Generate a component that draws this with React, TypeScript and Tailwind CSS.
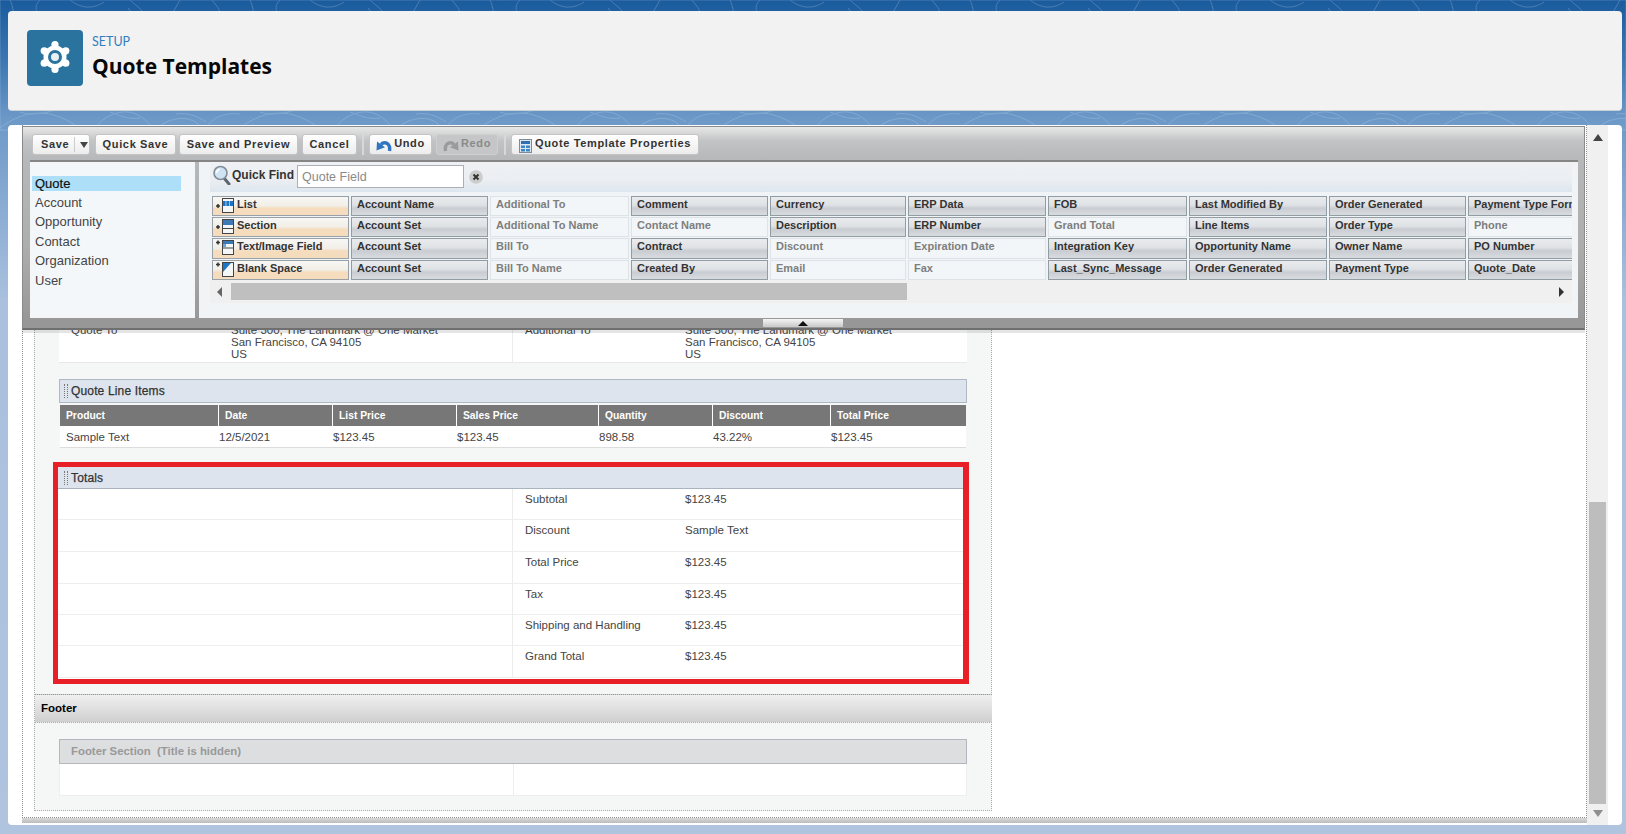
const sans = "font-['Liberation_Sans',Arial,sans-serif]";

const Gear = () => (
  <svg viewBox="0 0 56 56" className="w-[56px] h-[56px]">
    <g fill="#fff">
      <circle cx="28" cy="27" r="11.5" />
      <circle cx="28" cy="14.5" r="3.6" />
      <circle cx="28" cy="39.5" r="3.6" />
      <circle cx="17.2" cy="20.8" r="3.6" />
      <circle cx="38.8" cy="20.8" r="3.6" />
      <circle cx="17.2" cy="33.2" r="3.6" />
      <circle cx="38.8" cy="33.2" r="3.6" />
      <path d="M25 15h6l1 5h-8zM25 39h6l1-5h-8zM15 23l3-5.2 4.7 1.8-4 6.8zM41 23l-3-5.2-4.7 1.8 4 6.8zM15 31l3 5.2 4.7-1.8-4-6.8zM41 31l-3 5.2-4.7-1.8 4-6.8z" />
    </g>
    <circle cx="28" cy="27" r="5.5" fill="#e8f0f4" stroke="#2b739f" strokeWidth="3" />
  </svg>
);

const TopoLines = () => (
  <svg className="absolute inset-0 w-full h-full opacity-25" viewBox="0 0 1626 834" fill="none" stroke="#cfe0f2" strokeWidth="1">
    <defs>
      <pattern id="topo" width="240" height="130" patternUnits="userSpaceOnUse">
        <path d="M10 0c4 8 2 14 8 22M40 0c-6 6-4 10-2 14M70 0c10 8 22 10 34 2M130 0c6 6 14 10 12 14s-10 0-14-6M180 0l-8 14M212 0c4 6 10 10 6 14" />
        <path d="M0 128c18-14 40-20 62-10 14 6 18 12 26 12M96 128c6-12 26-20 40-14 12 6 10 10 20 14M160 126c10-8 30-12 40 0M206 128c6-10 18-16 34-14" />
        <path d="M20 112c10 4 26 2 40-4M110 112c8 2 16 8 30 6M176 114c10-2 22 2 30 8" />
      </pattern>
    </defs>
    <rect width="1626" height="130" fill="url(#topo)" />
  </svg>
);

const Undo = ({ color }: { color: string }) => (
  <svg viewBox="0 0 16 15" className="w-[16px] h-[15px] shrink-0">
    <path d="M13.5 14C14.5 8 11 4.5 6.5 6.2L5 7.5" fill="none" stroke={color} strokeWidth="3.4" />
    <path d="M0.5 13.5L1 4.5L9 10.2Z" fill={color} />
  </svg>
);

const Redo = ({ color }: { color: string }) => (
  <svg viewBox="0 0 16 15" className="w-[16px] h-[15px] shrink-0">
    <path d="M2.5 14C1.5 8 5 4.5 9.5 6.2L11 7.5" fill="none" stroke={color} strokeWidth="3.4" />
    <path d="M15.5 13.5L15 4.5L7 10.2Z" fill={color} />
  </svg>
);

const PropsIcon = () => (
  <svg viewBox="0 0 13 14" className="w-[13px] h-[14px] shrink-0 mt-[2px]">
    <rect x="0.5" y="0.5" width="12" height="13" fill="#dfe7ef" stroke="#7c8a99" />
    <rect x="2" y="2" width="9" height="3" fill="#2f6fb0" />
    <rect x="2" y="6.5" width="4" height="2.5" fill="#3e86c6" />
    <rect x="7" y="6.5" width="4" height="2.5" fill="#3e86c6" />
    <rect x="2" y="10" width="4" height="2.5" fill="#3e86c6" />
    <rect x="7" y="10" width="4" height="2.5" fill="#3e86c6" />
  </svg>
);

const Magnifier = () => (
  <svg viewBox="0 0 20 20" className="w-[20px] h-[20px] shrink-0">
    <path d="M12 13l5 6" stroke="#5d6670" strokeWidth="3" strokeLinecap="round" />
    <circle cx="8.5" cy="8" r="6.5" fill="#cfe3f3" stroke="#7f8c97" strokeWidth="1.6" />
    <path d="M4.5 8c0-2 1.5-3.5 3.5-3.8" fill="none" stroke="#fff" strokeWidth="1.6" />
  </svg>
);

const ClearIcon = () => (
  <svg viewBox="0 0 14 14" className="w-[14px] h-[14px]">
    <circle cx="7" cy="7" r="6.8" fill="#cccccc" />
    <path d="M4.5 4.5l5 5M9.5 4.5l-5 5" stroke="#333" strokeWidth="2" />
  </svg>
);

// little drag-in icons of the first column of the palette
const PaletteIcon = ({ kind }: { kind: number }) => (
  <svg viewBox="0 0 20 16" className="w-[20px] h-[16px] shrink-0">
    {kind < 2 ? (
      <path d="M1 9h4M3 7v4" stroke="#333" strokeWidth="1.5" />
    ) : (
      <path d="M1 3.5h4M3 1.5v4" stroke="#333" strokeWidth="1.5" />
    )}
    <rect x="7.5" y="1.5" width="11" height="14" fill="#f4f6f8" stroke="#444" />
    {kind === 0 && (
      <g>
        <rect x="8" y="4" width="10" height="5" fill="#1f74c4" />
        <path d="M11 4v5M14.5 4v5" stroke="#bcd8f0" strokeWidth="0.8" />
      </g>
    )}
    {kind === 1 && (
      <g>
        <rect x="8" y="2" width="10" height="5" fill="#3d7ab5" />
        <path d="M8 10.5h10" stroke="#444" />
      </g>
    )}
    {kind === 2 && (
      <g>
        <rect x="8" y="2" width="10" height="3" fill="#3d7ab5" />
        <rect x="8" y="5" width="3" height="3" fill="#6aa6dc" />
        <path d="M8 9h10" stroke="#444" />
      </g>
    )}
    {kind === 3 && <path d="M8 2h8L8 11Z" fill="#1f74c4" />}
  </svg>
);

const columns = [
  { w: "w-[137px]", items: [["Account Name", 1], ["Account Set", 1], ["Account Set", 1], ["Account Set", 1]] },
  { w: "w-[139px]", items: [["Additional To", 0], ["Additional To Name", 0], ["Bill To", 0], ["Bill To Name", 0]] },
  { w: "w-[137px]", items: [["Comment", 1], ["Contact Name", 0], ["Contract", 1], ["Created By", 1]] },
  { w: "w-[136px]", items: [["Currency", 1], ["Description", 1], ["Discount", 0], ["Email", 0]] },
  { w: "w-[138px]", items: [["ERP Data", 1], ["ERP Number", 1], ["Expiration Date", 0], ["Fax", 0]] },
  { w: "w-[139px]", items: [["FOB", 1], ["Grand Total", 0], ["Integration Key", 1], ["Last_Sync_Message", 1]] },
  { w: "w-[138px]", items: [["Last Modified By", 1], ["Line Items", 1], ["Opportunity Name", 1], ["Order Generated", 1]] },
  { w: "w-[137px]", items: [["Order Generated", 1], ["Order Type", 1], ["Owner Name", 1], ["Payment Type", 1]] },
  { w: "w-[137px]", items: [["Payment Type Format", 1], ["Phone", 0], ["PO Number", 1], ["Quote_Date", 1]] },
];

const rowHeights = ["h-[20px]", "h-[20px]", "h-[21px]", "h-[20px]"];

const PaletteButton = ({ label, on, h }: { label: string; on: boolean; h: string }) => (
  <div
    className={`${h} pl-[5px] leading-[15px] text-[11px] font-bold whitespace-nowrap overflow-hidden ${
      on
        ? "border border-[#929ca4] text-[#333] bg-[linear-gradient(#e9ebed_0%,#dfe2e5_45%,#c9cdd2_62%,#d8dcdf_100%)]"
        : "border border-[#dde3e7] text-[#7e7e7e] bg-[#f2f6f9]"
    }`}
  >
    {label}
  </div>
);

const ToolButton = ({ w, children }: { w: string; children: React.ReactNode }) => (
  <div
    className={`${w} h-[21px] shrink-0 flex items-center justify-center rounded-[3px] border border-[#c4c4c4] bg-[linear-gradient(#ffffff,#ececec)] text-[11px] font-bold tracking-[0.65px] text-[#333]`}
  >
    {children}
  </div>
);

const Sep = () => <div className="w-[2px] h-[21px] bg-[#d8d8d8] shrink-0" />;

const Panel = () => (
  <div className="absolute left-0 top-[1px] z-10 w-[1563px] h-[204px] border border-b-[2px] border-[#8a8a8a] border-b-[#6f6f6f] pl-[7px] pr-[6px] flex flex-col bg-[linear-gradient(#e8e8e8_0px,#c2c3c4_14px,#b7b8b9_32px,#adadad_120px,#979797_195px)] shadow-[0_3px_0_rgba(0,0,0,0.1)]">
    <div className="h-[33px] shrink-0 pt-[7px] pl-[2px] flex items-start">
      <div className="w-[58px] h-[21px] shrink-0 flex items-center rounded-[3px] border border-[#c4c4c4] bg-[linear-gradient(#ffffff,#ececec)] text-[11px] font-bold tracking-[0.65px] text-[#333]">
        <span className="w-[41px] pl-[8px]">Save</span>
        <span className="w-px h-[15px] bg-[#ccc]" />
        <span className="ml-[5px] w-0 h-0 border-x-[4px] border-x-transparent border-t-[6px] border-t-[#444]" />
      </div>
      <div className="w-[5px] shrink-0" />
      <ToolButton w="w-[81px]">Quick Save</ToolButton>
      <div className="w-[3px] shrink-0" />
      <ToolButton w="w-[119px]">Save and Preview</ToolButton>
      <div className="w-[4px] shrink-0" />
      <ToolButton w="w-[55px]">Cancel</ToolButton>
      <div className="w-[5px] shrink-0" />
      <Sep />
      <div className="w-[5px] shrink-0" />
      <ToolButton w="w-[63px]">
        <Undo color="#2f76c0" />
        <span className="ml-[2px] mb-[2px]">Undo</span>
      </ToolButton>
      <div className="w-[4px] shrink-0" />
      <div className="w-[62px] h-[21px] shrink-0 flex items-center justify-center rounded-[3px] border border-[#cfcfcf] bg-[#c5c6c7] text-[11px] font-bold tracking-[0.65px] text-[#8a8a8a]">
        <Redo color="#9b9b9b" />
        <span className="ml-[2px] mb-[2px]">Redo</span>
      </div>
      <div className="w-[6px] shrink-0" />
      <Sep />
      <div className="w-[5px] shrink-0" />
      <ToolButton w="w-[188px]">
        <PropsIcon />
        <span className="ml-[3px] mb-[2px]">Quote Template Properties</span>
      </ToolButton>
    </div>

    <div className="flex-1 flex gap-[4px] border-t-[2px] border-t-[#858585] min-h-0 mb-[10px]">
      <div className="w-[165px] shrink-0 bg-[#f4f7fa] pt-[14px] pl-[2px] text-[13px] text-[#444]">
        <div className="w-[149px] h-[15px] leading-[15px] bg-[#aedff8] pl-[3px] text-[#111] mb-[2px] [-webkit-text-stroke:0.2px_#111]">Quote</div>
        {["Account", "Opportunity", "Contact", "Organization", "User"].map((n) => (
          <div key={n} className="h-[19.4px] leading-[19px] pl-[3px]">
            {n}
          </div>
        ))}
      </div>
      <div className="flex-1 min-w-0 bg-[#f0f4f7] pl-[11px] pr-[6px]">
        <div className="h-[30px] flex items-start bg-[linear-gradient(#eff1f4_0%,#ebeef2_60%,#dde6ef_100%)] pt-[3px]">
          <div className="ml-[2px]">
            <Magnifier />
          </div>
          <span className="text-[12px] font-bold text-[#333] mt-[1px] w-[65px]">Quick Find</span>
          <div className="w-[167px] h-[23px] border border-[#aab0b5] bg-white pl-[4px] leading-[22px] text-[12.5px] text-[#8a8a8a]">Quote Field</div>
          <div className="ml-[5px] mt-[5px]">
            <ClearIcon />
          </div>
        </div>
        <div className="mt-[4px] pl-[2px] flex gap-[2px] overflow-hidden">
          <div className="w-[137px] shrink-0 flex flex-col gap-[1px]">
            {["List", "Section", "Text/Image Field", "Blank Space"].map((n, i) => (
              <div
                key={n}
                className={`${rowHeights[i]} flex items-start pl-[2px] border border-[#98a1a8] text-[11px] font-bold text-[#333] leading-[13px] bg-[linear-gradient(#f8f7f4_0%,#f2eee7_50%,#f4dcbd_62%,#f5dcbe_100%)]`}
              >
                <PaletteIcon kind={i} />
                <span className="ml-[2px] mt-[1px] whitespace-nowrap">{n}</span>
              </div>
            ))}
          </div>
          {columns.map((c, ci) => (
            <div key={ci} className={`${c.w} shrink-0 flex flex-col gap-[1px]`}>
              {c.items.map(([label, on], ri) => (
                <PaletteButton key={ri} label={label as string} on={on === 1} h={rowHeights[ri]} />
              ))}
            </div>
          ))}
        </div>
        <div className="h-[23px] bg-[#f0f0f0] flex items-center">
          <span className="ml-[7px] w-0 h-0 border-y-[5px] border-y-transparent border-r-[5px] border-r-[#666]" />
          <div className="ml-[9px] w-[676px] h-[17px] bg-[#bfbfbf]" />
          <div className="flex-1" />
          <span className="mr-[8px] w-0 h-0 border-y-[5px] border-y-transparent border-l-[5px] border-l-[#333]" />
        </div>
      </div>
    </div>
    <div className="absolute left-[740px] top-[192px] w-[80px] h-[8px] bg-[linear-gradient(#f5f5f5,#c9c9c9)] flex items-center justify-center">
      <span className="w-0 h-0 border-x-[5px] border-x-transparent border-b-[5px] border-b-[#111]" />
    </div>
  </div>
);

const Grip = () => <span className="w-[4px] h-[14px] border-x border-dotted border-[#777] shrink-0" />;

const tableCols = [
  { w: "w-[158px]", head: "Product", cell: "Sample Text", first: true },
  { w: "w-[114px]", head: "Date", cell: "12/5/2021" },
  { w: "w-[124px]", head: "List Price", cell: "$123.45" },
  { w: "w-[142px]", head: "Sales Price", cell: "$123.45" },
  { w: "w-[114px]", head: "Quantity", cell: "898.58" },
  { w: "w-[118px]", head: "Discount", cell: "43.22%" },
  { w: "w-[136px]", head: "Total Price", cell: "$123.45" },
];

const totals = [
  ["Subtotal", "$123.45", "h-[31px]"],
  ["Discount", "Sample Text", "h-[32px]"],
  ["Total Price", "$123.45", "h-[32px]"],
  ["Tax", "$123.45", "h-[31px]"],
  ["Shipping and Handling", "$123.45", "h-[31px]"],
  ["Grand Total", "$123.45", "h-[32px]"],
];

const Address = ({ label }: { label: string }) => (
  <div className="flex pl-[12px] pt-[6px] leading-[12px]">
    <div className="w-[160px]">{label}</div>
    <div>
      <div>Suite 300, The Landmark @ One Market</div>
      <div>San Francisco, CA 94105</div>
      <div>US</div>
    </div>
  </div>
);

const SectionTitle = ({ title, pad }: { title: string; pad: string }) => (
  <div className={`flex items-center gap-[3px] ${pad} text-[12px] tracking-[0.15px] text-[#333] [-webkit-text-stroke:0.25px_#333]`}>
    <Grip />
    <span>{title}</span>
  </div>
);

const Editor = () => (
  <div className="relative w-[1565px] h-[700px] shrink-0 flex flex-col">
    <Panel />
    <div className="h-[693px] shrink-0 border-l border-r border-b border-dotted border-[#8f8f8f] pl-[11px] pt-[1px] overflow-hidden">
      <div className="w-[958px] h-[685px] border-x border-b border-dotted border-[#aaa] bg-[#f5f6f6] pl-[24px] pt-[192px] text-[11.5px] text-[#444] flex flex-col">
        <div className="w-[908px] h-[45px] shrink-0 flex bg-white border-b border-[#e8e8e8]">
          <div className="w-[454px] border-r border-[#ececec]">
            <Address label="Quote To" />
          </div>
          <div className="flex-1">
            <Address label="Additional To" />
          </div>
        </div>

        <div className="mt-[16px] w-[908px] h-[24px] shrink-0 flex items-center border border-[#aeb9c4] bg-[#dee4ed]">
          <SectionTitle title="Quote Line Items" pad="pl-[4px]" />
        </div>
        <div className="mt-[2px] ml-[1px] w-[906px] shrink-0">
          <div className="h-[21px] flex bg-[#777777] text-[10.3px] font-bold text-white leading-[21px]">
            {tableCols.map((c) => (
              <div key={c.head} className={`${c.w} shrink-0 pl-[6px] ${c.first ? "" : "border-l border-white"}`}>
                {c.head}
              </div>
            ))}
          </div>
          <div className="h-[22px] flex bg-white border-b border-[#dddddd] leading-[22px]">
            {tableCols.map((c) => (
              <div key={c.head} className={`${c.w} shrink-0 ${c.first ? "pl-[6px]" : "pl-[1px]"}`}>
                {c.cell}
              </div>
            ))}
          </div>
        </div>

        <div className="mt-[14px] -ml-[6px] w-[916px] h-[222px] shrink-0 border-[5px] border-r-[6px] border-[#e81f27] bg-white">
          <div className="h-[22px] flex items-center bg-[#dee4ed] border-b border-[#aab4bf]">
            <SectionTitle title="Totals" pad="pl-[6px]" />
          </div>
          {totals.map(([label, value, h]) => (
            <div key={label} className={`${h} flex border-b border-[#eeeeee] leading-[14px]`}>
              <div className="w-[455px] border-r border-[#ececec]" />
              <div className="pl-[12px] pt-[3px] w-[172px]">{label}</div>
              <div className="pt-[3px]">{value}</div>
            </div>
          ))}
        </div>

        <div className="mt-[10px] -ml-[24px] w-[957px] h-[29px] shrink-0 border-t border-dotted border-[#999] border-b border-b-[#aaaaaa] bg-[linear-gradient(#f0f0f0,#cfcfcf)] pl-[6px] flex items-center text-[11.5px] font-bold text-black">
          Footer
        </div>

        <div className="mt-[16px] w-[908px] h-[25px] shrink-0 flex items-center border border-[#b2b8bd] bg-[#dcdee0] pl-[11px] text-[11.4px] font-bold text-[#999] whitespace-pre">
          Footer Section  (Title is hidden)
        </div>
        <div className="w-[908px] h-[32px] shrink-0 flex bg-white border-x border-b border-[#eeeeee]">
          <div className="w-[454px] border-r border-[#eeeeee]" />
        </div>
      </div>
    </div>
    <div className="h-[5px] shrink-0 bg-[linear-gradient(#d8d8d8,#bcbcbc)]" />
  </div>
);

const Scrollbar = () => (
  <div className="w-[21px] shrink-0 bg-[#f0f0f0] flex flex-col items-center">
    <span className="mt-[9px] w-0 h-0 border-x-[5px] border-x-transparent border-b-[7px] border-b-[#444]" />
    <div className="mt-[361px] w-[17px] h-[302px] bg-[#bdbdbd]" />
    <span className="mt-[6px] w-0 h-0 border-x-[5px] border-x-transparent border-t-[7px] border-t-[#8f8f8f]" />
  </div>
);

export default function App() {
  return (
    <div className={`${sans} relative w-[1626px] h-[834px] overflow-hidden pt-[11px] pl-[8px] bg-[linear-gradient(#1a5b9d_0px,#3c76b2_60px,#6d99c8_120px,#a9c0de_300px,#b0c4e0_834px)]`}>
      <TopoLines />
      <div className="relative w-[1614px] h-[100px] rounded-[4px] bg-[#f3f2f2] border-b border-[#c9d0d8] pl-[19px] flex items-center gap-[9px]">
        <div className="w-[56px] h-[56px] rounded-[4px] bg-[#2b739f] mb-[5px]">
          <Gear />
        </div>
        <div className="flex flex-col mb-[7px]">
          <span className="font-['Lato',sans-serif] text-[12.5px] leading-[18px] text-[#2f7fc1]">SETUP</span>
          <span className="font-['Open_Sans',sans-serif] text-[21px] leading-[31px] font-bold text-[#080707]">Quote Templates</span>
        </div>
      </div>
      <div className="relative mt-[14px] w-[1614px] h-[700px] rounded-[4px] bg-white pl-[14px] flex overflow-hidden">
        <Editor />
        <Scrollbar />
      </div>
    </div>
  );
}
